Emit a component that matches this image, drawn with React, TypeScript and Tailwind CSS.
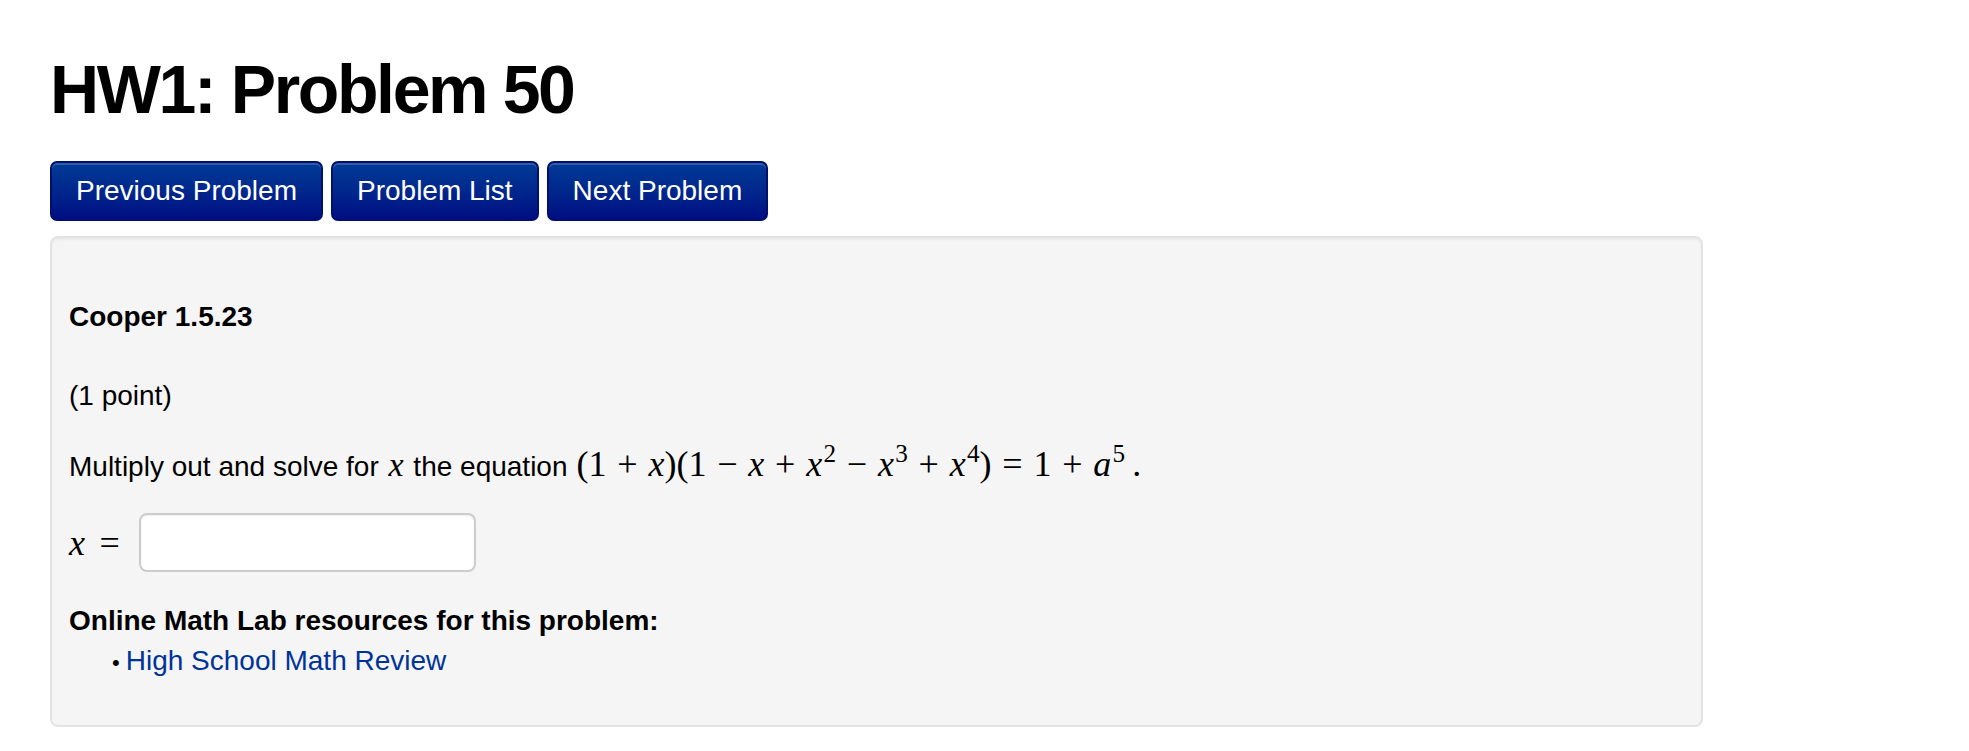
import React from "react";

const sans = "font-['Helvetica','Liberation_Sans',Arial,sans-serif]";
const serif = "font-['Liberation_Serif','Times_New_Roman',serif]";

function V({ children }: { children: React.ReactNode }) {
  return <span className="italic">{children}</span>;
}

function Op({ children }: { children: React.ReactNode }) {
  return <span className="mx-[0.3em]">{children}</span>;
}

function Sup({ children }: { children: React.ReactNode }) {
  return <sup className="text-[0.7em] ml-[0.05em] top-[-0.55em]">{children}</sup>;
}

export default function App() {
  return (
    <div className={`bg-white text-black ${sans}`}>
      <div className="pl-[50px] pr-[266px] pt-[55px]">
        {/* Title */}
        <h1 className="text-[68px] leading-[68px] font-bold tracking-[-0.035em]">HW1: Problem 50</h1>

        {/* Nav buttons */}
        <div className="mt-[38px] flex gap-[8px]">
          {["Previous Problem", "Problem List", "Next Problem"].map((label) => (
            <button
              key={label}
              className="h-[60px] px-[24px] rounded-[7px] border-2 border-[#00106e] bg-gradient-to-b from-[#033a96] to-[#000c82] text-white text-[28px] leading-none shadow-[inset_0_2px_0_rgba(255,255,255,0.18)]"
            >
              {label}
            </button>
          ))}
        </div>

        {/* Problem card */}
        <div className="mt-[15px] rounded-[8px] border-2 border-[#e3e3e3] bg-[#f5f5f5] shadow-[inset_0_2px_2px_rgba(0,0,0,0.05)] pl-[17px] pt-[59px] pb-[42px] text-[28px] leading-[40px]">
          <div className="font-bold">Cooper 1.5.23</div>

          <div className="mt-[39px]">(1 point)</div>

          <div className="mt-[28px] flex items-baseline whitespace-nowrap h-[40px]">
            <span>
              Multiply out and solve for <span className={`${serif} italic text-[34px] mx-[2px]`}>x</span> the equation
            </span>
            <span className={`${serif} text-[36px] ml-[9px]`}>
              (1<Op>+</Op><V>x</V>)(1<Op>−</Op><V>x</V>
              <Op>+</Op>
              <V>x</V>
              <Sup>2</Sup>
              <Op>−</Op>
              <V>x</V>
              <Sup>3</Sup>
              <Op>+</Op>
              <V>x</V>
              <Sup>4</Sup>)<Op>=</Op>1<Op>+</Op>
              <V>a</V>
              <Sup>5</Sup>
              <span className="ml-[0.2em]">.</span>
            </span>
          </div>

          <div className="mt-[29px] flex items-center">
            <span className={`${serif} text-[36px] w-[70px] whitespace-nowrap`}>
              <V>x</V>
              <span className="ml-[0.4em]">=</span>
            </span>
            <input
              type="text"
              className="h-[59px] w-[337px] rounded-[8px] border-2 border-[#cccccc] bg-white px-3 outline-none shadow-[inset_0_1px_2px_rgba(0,0,0,0.08)]"
            />
          </div>

          <div className="mt-[29px] font-bold">Online Math Lab resources for this problem:</div>
          <ul className="pl-[43px]">
            <li className="flex items-baseline">
              <span className="mr-[6px] text-[22px]">•</span>
              <a href="#" className="text-[#003399]">
                High School Math Review
              </a>
            </li>
          </ul>
        </div>
      </div>
    </div>
  );
}
